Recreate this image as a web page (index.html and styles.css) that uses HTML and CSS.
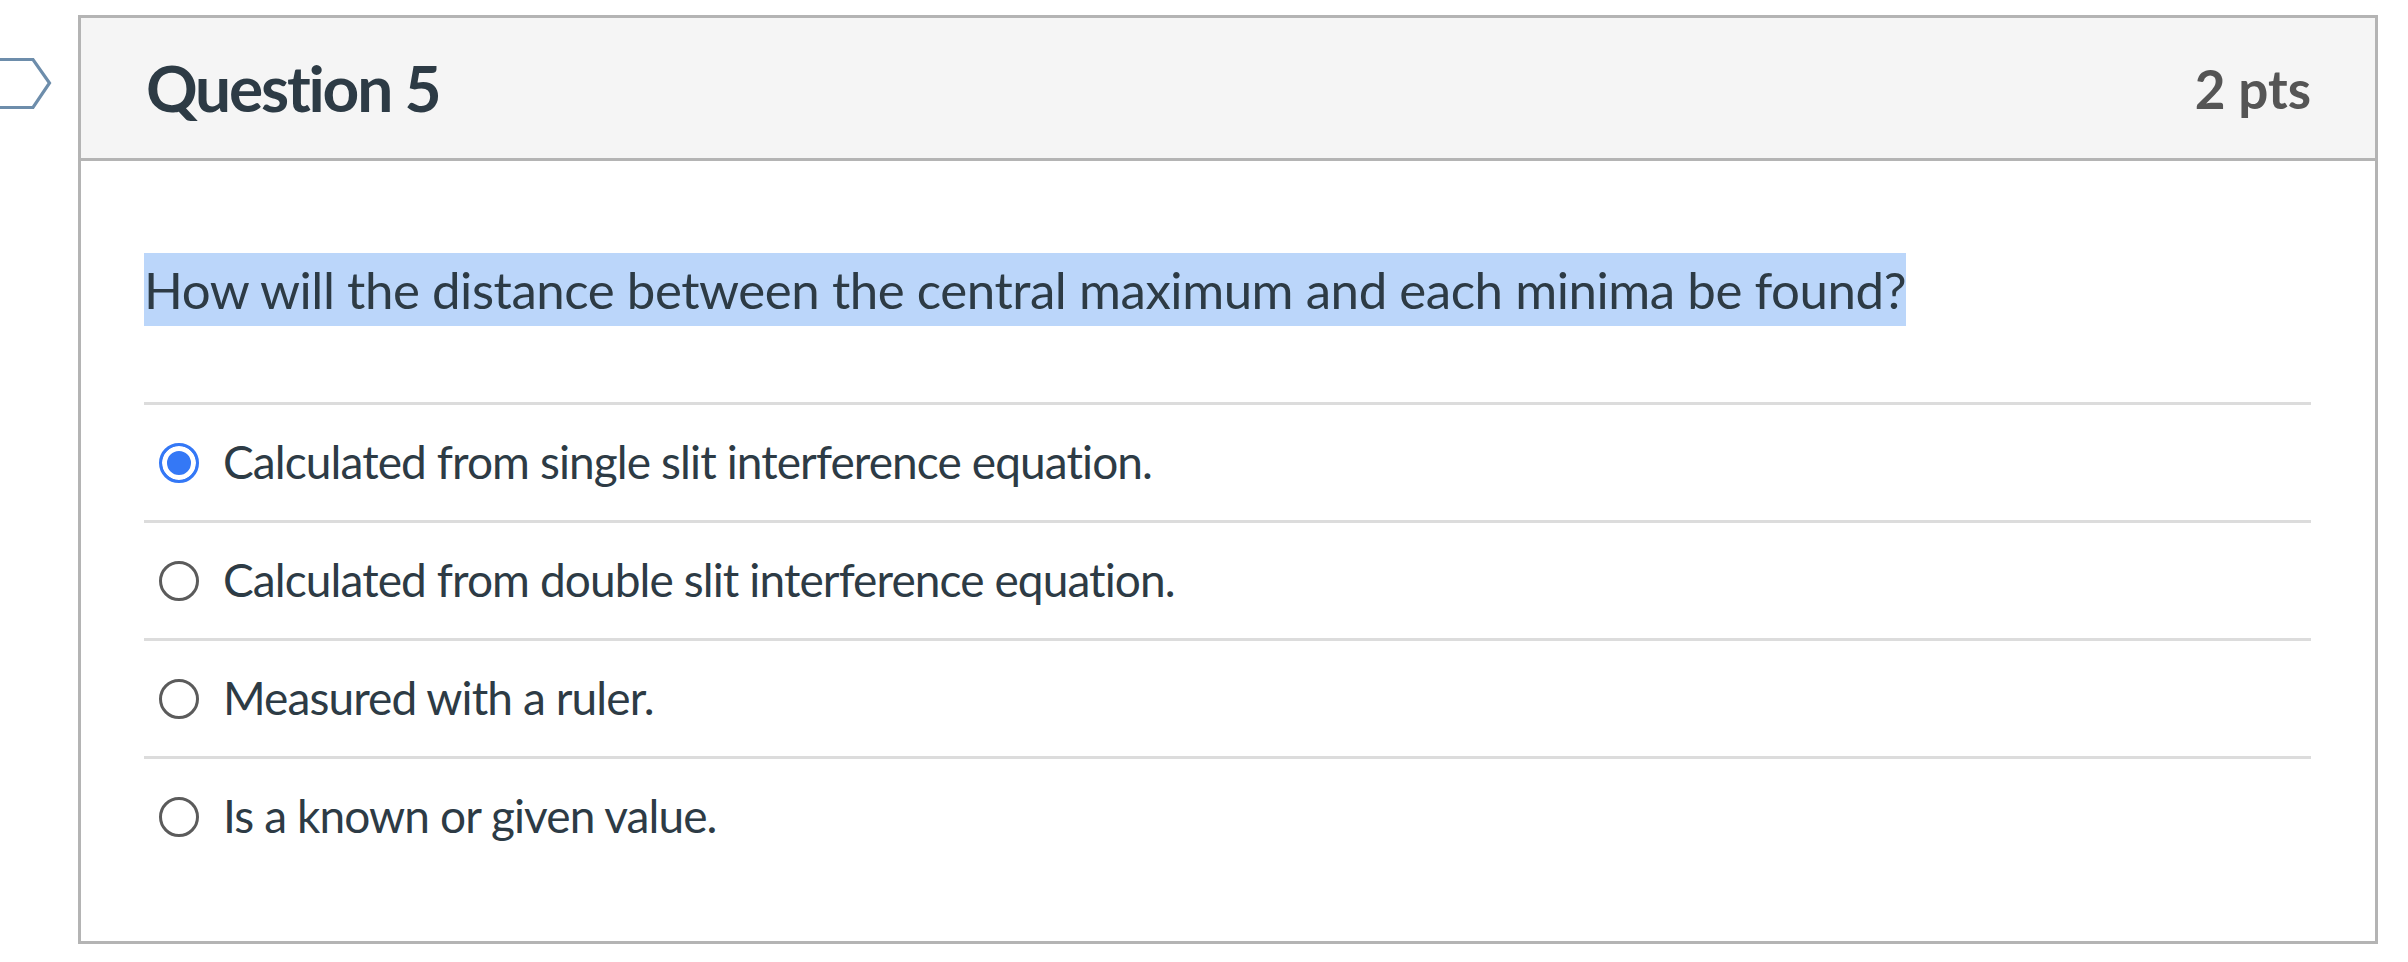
FILE: index.html
```html
<!DOCTYPE html>
<html lang="en">
<head>
<meta charset="utf-8">
<title>Question 5</title>
<link rel="stylesheet" href="styles.css">
</head>
<body>
<div class="page">
  <div class="flag-col">
    <svg class="flag" width="54" height="56" viewBox="0 0 54 56" aria-hidden="true">
      <polyline points="-6,2.5 33,2.5 49.5,26 33,50.5 -6,50.5" fill="#fff" stroke="#6d8dab" stroke-width="3.2" stroke-linejoin="miter"/>
    </svg>
  </div>
  <div class="question">
    <div class="q-header">
      <h2 class="q-title">Question 5</h2>
      <div class="q-points">2 pts</div>
    </div>
    <div class="q-body">
      <p class="q-text"><span class="selected-text">How will the distance between the central maximum and each minima be found?</span></p>
      <div class="answers">
        <div class="answer"><span class="radio checked"></span><span class="answer-label">Calculated from single slit interference equation.</span></div>
        <div class="answer"><span class="radio"></span><span class="answer-label">Calculated from double slit interference equation.</span></div>
        <div class="answer"><span class="radio"></span><span class="answer-label">Measured with a ruler.</span></div>
        <div class="answer"><span class="radio"></span><span class="answer-label">Is a known or given value.</span></div>
      </div>
    </div>
  </div>
</div>
</body>
</html>
```

FILE: styles.css
```css
html, body {
  margin: 0;
  padding: 0;
  background: #ffffff;
}

body {
  font-family: Lato, "Liberation Sans", sans-serif;
  color: #2d3b45;
}

.page {
  display: flex;
  align-items: flex-start;
  padding-top: 15px;
}

.flag-col {
  width: 78px;
  flex: 0 0 78px;
}

.flag {
  display: block;
  margin-top: 42px;
}

.question {
  width: 2300px;
  box-sizing: border-box;
  border: 3px solid #b4b4b4;
}

.q-header {
  display: flex;
  align-items: center;
  justify-content: space-between;
  height: 140px;
  padding: 0 64px 0 65px;
  background: #f5f5f5;
  border-bottom: 3px solid #b4b4b4;
}

.q-title {
  margin: 0;
  font-size: 64px;
  font-weight: 700;
  letter-spacing: -2.2px;
  color: #2d3b45;
  line-height: 1;
}

.q-points {
  font-size: 53px;
  font-weight: 700;
  color: #555555;
  line-height: 1;
}

.q-body {
  padding: 92px 64px 67px 63px;
}

.q-text {
  margin: 0 0 76px 0;
  font-size: 51px;
  letter-spacing: -0.45px;
  line-height: 73px;
}

.selected-text {
  display: inline-block;
  background: #bbd6fa;
  line-height: 73px;
}

.answer {
  display: flex;
  align-items: center;
  height: 115px;
  border-top: 3px solid #dcdcdc;
}

.radio {
  flex: 0 0 auto;
  width: 34px;
  height: 34px;
  margin-left: 15px;
  margin-right: 24px;
  border: 3px solid #5b5b5b;
  border-radius: 50%;
  background: #ffffff;
}

.radio.checked {
  border-color: #3478f6;
  background: #3478f6;
  box-shadow: inset 0 0 0 5px #ffffff;
}

.answer-label {
  font-size: 46px;
  letter-spacing: -0.9px;
  line-height: 1.4;
}
```
